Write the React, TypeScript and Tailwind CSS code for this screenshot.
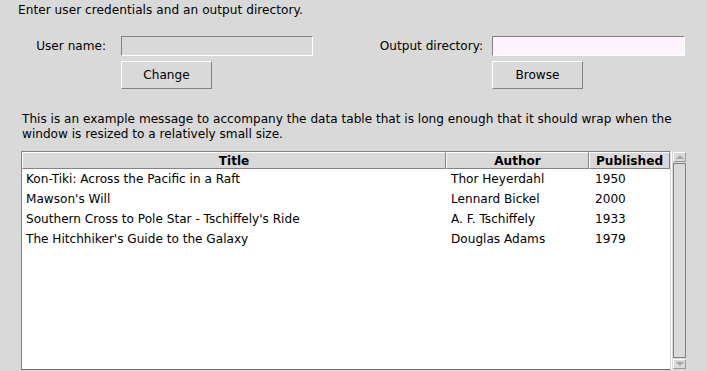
const books = [
  { title: "Kon-Tiki: Across the Pacific in a Raft", author: "Thor Heyerdahl", year: "1950" },
  { title: "Mawson's Will", author: "Lennard Bickel", year: "2000" },
  { title: "Southern Cross to Pole Star - Tschiffely's Ride", author: "A. F. Tschiffely", year: "1933" },
  { title: "The Hitchhiker's Guide to the Galaxy", author: "Douglas Adams", year: "1979" },
];

function Entry({ bg }: { bg: string }) {
  return (
    <div
      className={`h-[20px] border border-t-[#828282] border-l-[#828282] border-b-white border-r-white ${bg}`}
    />
  );
}

function Button({ label }: { label: string }) {
  return (
    <button className="w-[91px] h-[28px] leading-[26px] text-center border border-t-white border-l-white border-b-[#828282] border-r-[#828282] bg-[#d9d9d9]">
      {label}
    </button>
  );
}

function HeaderCell({ label, w }: { label: string; w: string }) {
  return (
    <div
      className={`${w} h-full text-center font-bold leading-[16px] border border-t-white border-l-white border-b-[#828282] border-r-[#828282]`}
    >
      {label}
    </div>
  );
}

function Arrow({ up }: { up: boolean }) {
  return (
    <div className="h-[10px] flex items-center justify-center border border-t-white border-l-white border-b-[#9a9a9a] border-r-[#9a9a9a]">
      <svg width="8" height="4" viewBox="0 0 8 4">
        <path d={up ? "M0 4 L4 0 L8 4 Z" : "M0 0 L4 4 L8 0 Z"} fill="#a6a6a6" />
      </svg>
    </div>
  );
}

export default function App() {
  return (
    <div
      className="w-[707px] h-[371px] overflow-hidden bg-[#d9d9d9] text-black text-[12.1px]"
      style={{ fontFamily: '"DejaVu Sans", sans-serif' }}
    >
      {/* Header text */}
      <div className="pl-[18px] pt-[3px] leading-[15px] tracking-[0.05px]">
        Enter user credentials and an output directory.
      </div>

      {/* Form */}
      <div className="mt-[18px] flex items-center leading-[20px]">
        <div className="w-[121px] text-right pr-[15px]">User name:</div>
        <div className="w-[192px]">
          <Entry bg="bg-[#d9d9d9]" />
        </div>
        <div className="w-[179px] text-right pr-[9px]">Output directory:</div>
        <div className="w-[193px]">
          <Entry bg="bg-[#fdf3fc]" />
        </div>
      </div>
      <div className="mt-[5px] flex">
        <div className="ml-[121px]">
          <Button label="Change" />
        </div>
        <div className="ml-[280px]">
          <Button label="Browse" />
        </div>
      </div>

      {/* Message */}
      <p className="mt-[23px] pl-[22px] pr-[30px] leading-[15px]">
        This is an example message to accompany the data table that is long enough that it should wrap when the
        window is resized to a relatively small size.
      </p>

      {/* Table */}
      <div className="mt-[9px] ml-[21px] flex h-[220px]">
        <div className="w-[650px] h-[219px] flex flex-col border border-t-[#828282] border-l-[#828282] border-b-[#6e6e6e] border-r-[#d9d9d9] bg-white">
          <div className="flex h-[17px] shrink-0 bg-[#d9d9d9]">
            <HeaderCell label="Title" w="w-[424px]" />
            <HeaderCell label="Author" w="w-[143px]" />
            <HeaderCell label="Published" w="w-[81px]" />
          </div>
          {books.map((b) => (
            <div key={b.title} className="flex h-[20px] leading-[20px]">
              <div className="w-[424px] pl-[4px]">{b.title}</div>
              <div className="w-[143px] pl-[5px]">{b.author}</div>
              <div className="w-[81px] pl-[6px]">{b.year}</div>
            </div>
          ))}
        </div>
        <div className="w-[16px] h-[219px] flex flex-col p-[1px] border-l border-white">
          <Arrow up />
          <div className="flex-1 my-[1px] border border-[#828282]" />
          <Arrow up={false} />
        </div>
      </div>
    </div>
  );
}
